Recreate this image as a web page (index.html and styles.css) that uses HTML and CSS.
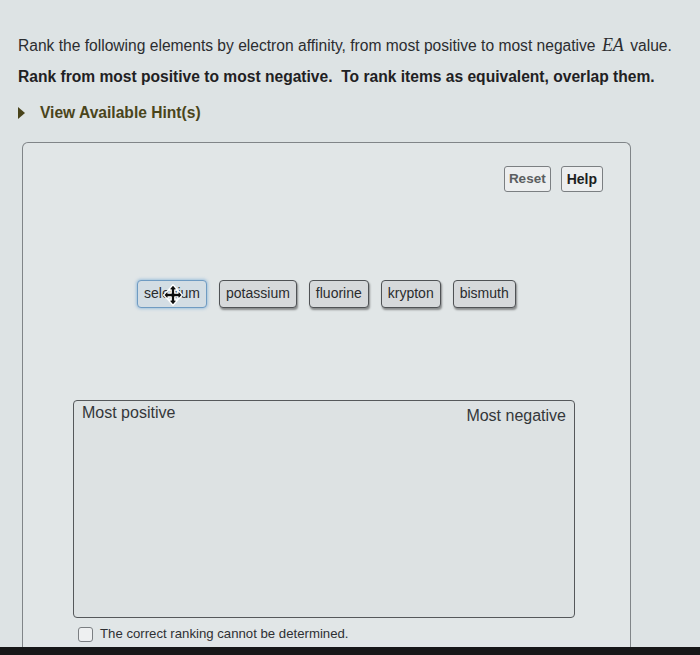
FILE: index.html
```html
<!DOCTYPE html>
<html>
<head>
<meta charset="utf-8">
<link rel="stylesheet" href="styles.css">
</head>
<body>
<div class="page">
  <div class="question">
    <p class="q1">Rank the following elements by electron affinity, from most positive to most negative <span class="math">EA</span> value.</p>
    <p class="q2">Rank from most positive to most negative.&nbsp; To rank items as equivalent, overlap them.</p>
    <div class="hint"><span class="tri"></span><span class="hint-text">View Available Hint(s)</span></div>
  </div>
  <div class="panel">
    <div class="tools">
      <span class="btn btn-reset">Reset</span>
      <span class="btn btn-help">Help</span>
    </div>
    <div class="chips">
      <span class="chip chip-active">selenium
        <svg class="cursor" width="20" height="22" viewBox="0 0 20 22">
          <path d="M10 0.8 L14.6 6 L11.8 6 L11.8 9.2 L15 9.2 L15 6.4 L19.4 11 L15 15.6 L15 12.8 L11.8 12.8 L11.8 16 L14.6 16 L10 21.2 L5.4 16 L8.2 16 L8.2 12.8 L5 12.8 L5 15.6 L0.6 11 L5 6.4 L5 9.2 L8.2 9.2 L8.2 6 L5.4 6 Z" fill="#0e0e0e" stroke="#ffffff" stroke-width="1.3" stroke-linejoin="round"/>
        </svg>
      </span>
      <span class="chip">potassium</span>
      <span class="chip">fluorine</span>
      <span class="chip">krypton</span>
      <span class="chip">bismuth</span>
    </div>
    <div class="rankbox">
      <span class="rank-label">Most positive</span>
      <span class="rank-label rank-neg">Most negative</span>
    </div>
    <label class="check">
      <span class="box"></span>
      <span class="check-text">The correct ranking cannot be determined.</span>
    </label>
  </div>
  <div class="strip"></div>
</div>
</body>
</html>
```

FILE: styles.css
```css
html, body {
  margin: 0;
  padding: 0;
}
body {
  width: 700px;
  height: 655px;
  overflow: hidden;
  background: #dde3e4;
  font-family: "Liberation Sans", Arial, sans-serif;
  color: #2a2c2e;
}
.page {
  display: flex;
  flex-direction: column;
  height: 655px;
}
.question {
  padding: 35px 0 0 18px;
}
.q1 {
  margin: 0;
  font-size: 15.6px;
  line-height: 20px;
  color: #2b2d30;
  white-space: nowrap;
}
.math {
  font-family: "Liberation Serif", "Times New Roman", serif;
  font-style: italic;
  font-size: 18px;
  padding: 0 2px;
}
.q2 {
  margin: 11px 0 0;
  font-size: 15.6px;
  line-height: 20px;
  font-weight: bold;
  color: #1f2123;
  white-space: nowrap;
}
.hint {
  margin-top: 16px;
  display: flex;
  align-items: center;
  height: 20px;
}
.tri {
  width: 0;
  height: 0;
  border-top: 6px solid transparent;
  border-bottom: 6px solid transparent;
  border-left: 7px solid #48431a;
}
.hint-text {
  margin-left: 15px;
  font-size: 15.6px;
  font-weight: bold;
  color: #4a451b;
}
.panel {
  margin: 19px 0 0 22px;
  width: 607px;
  flex: 1;
  border: 1px solid #808588;
  border-bottom: none;
  border-radius: 6px 6px 0 0;
  background: #e1e6e7;
  display: flex;
  flex-direction: column;
}
.tools {
  display: flex;
  justify-content: flex-end;
  gap: 10px;
  margin: 23px 27px 0 0;
}
.btn {
  height: 24px;
  line-height: 24px;
  border: 1px solid #7b7f82;
  border-radius: 3px;
  background: #eceeef;
  font-weight: bold;
  font-size: 14px;
  padding: 0 5px;
}
.btn-reset {
  color: #5b5e61;
  font-size: 13.5px;
  padding: 0 4px;
}
.btn-help {
  color: #1d1e20;
}
.chips {
  display: flex;
  gap: 12px;
  margin: 88px 0 0 114px;
}
.chip {
  position: relative;
  height: 28px;
  line-height: 25px;
  padding: 0 6px;
  border: 1.5px solid #4f5255;
  border-radius: 4px;
  background: #d6d9db;
  font-size: 14px;
  color: #2a2c2e;
  box-shadow: 1px 2px 2px rgba(0, 0, 0, 0.4);
  box-sizing: border-box;
}
.chip-active {
  border-color: #6f9bc2;
  background: #d3dde4;
  box-shadow: 0 0 3px 1px rgba(120, 170, 215, 0.6);
}
.cursor {
  position: absolute;
  left: 25px;
  top: 3px;
}
.rankbox {
  margin: 92px 0 0 50px;
  width: 502px;
  height: 218px;
  box-sizing: border-box;
  border: 1.5px solid #55585b;
  border-radius: 4px;
  background: #dde2e3;
  display: flex;
  justify-content: space-between;
  align-items: flex-start;
  padding: 2px 8px 0 8px;
}
.rank-label {
  font-size: 16px;
  color: #34373a;
  line-height: 20px;
}
.rank-neg {
  margin-top: 3px;
}
.check {
  display: flex;
  align-items: center;
  gap: 7px;
  margin: 8px 0 0 55px;
}
.box {
  width: 13px;
  height: 13px;
  border: 1px solid #7b7f82;
  border-radius: 3px;
  background: #eef0f1;
}
.check-text {
  font-size: 13.2px;
  color: #2e3033;
  line-height: 16px;
}
.strip {
  height: 8px;
  background: #161718;
}
```
